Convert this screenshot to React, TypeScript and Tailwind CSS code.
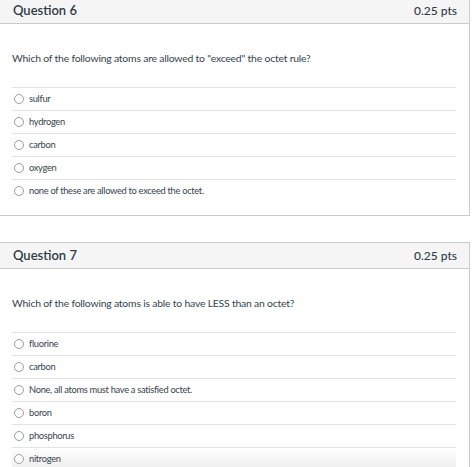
import React from 'react';

interface Question {
  title: string;
  points: string;
  text: string;
  answers: string[];
}

const QUESTIONS: Question[] = [
  {
    title: 'Question 6',
    points: '0.25 pts',
    text: 'Which of the following atoms are allowed to "exceed" the octet rule?',
    answers: ['sulfur', 'hydrogen', 'carbon', 'oxygen', 'none of these are allowed to exceed the octet.'],
  },
  {
    title: 'Question 7',
    points: '0.25 pts',
    text: 'Which of the following atoms is able to have LESS than an octet?',
    answers: ['fluorine', 'carbon', 'None, all atoms must have a satisfied octet.', 'boron', 'phosphorus', 'nitrogen'],
  },
];

function QuestionCard({ q, last }: { q: Question; last?: boolean }) {
  return (
    <div className="-ml-[2px] w-[472px] border border-[#c7cdd1] bg-white">
      {/* Header */}
      <div className="flex h-[26px] items-center justify-between border-b border-[#c7cdd1] bg-[#f5f5f5] pl-[14px] pr-[12px] text-[#2d3b45]">
        <span className="text-[13px] font-semibold">{q.title}</span>
        <span className="text-[12px] font-medium">{q.points}</span>
      </div>

      {/* Body */}
      <div className="px-[13px] pb-[13px]">
        <p className="pt-[27px] pb-[22px] text-[10.4px] leading-[14px] tracking-[-0.2px] text-[#35434d]">
          {q.text}
        </p>
        <div>
          {q.answers.map((a, i) => (
            <div
              key={a}
              className={`flex h-[23px] items-center gap-[5px] border-t border-[#e2e4e6] pl-[2px] ${
                last && i === q.answers.length - 1 ? 'bg-gradient-to-b from-white to-[#ececec]' : ''
              }`}
            >
              <span className="h-[10px] w-[10px] rounded-full border border-[#9a9ea2] bg-white" />
              <span className="text-[9.3px] tracking-[-0.3px] text-[#35434d]">{a}</span>
            </div>
          ))}
        </div>
      </div>
    </div>
  );
}

export default function App() {
  return (
    <div
      className="h-[467px] w-[474px] overflow-hidden bg-white"
      style={{ fontFamily: 'Lato, "Open Sans", sans-serif' }}
    >
      <div className="-mt-[3px] flex flex-col gap-[26px]">
        <QuestionCard q={QUESTIONS[0]} />
        <QuestionCard q={QUESTIONS[1]} last />
      </div>
    </div>
  );
}
